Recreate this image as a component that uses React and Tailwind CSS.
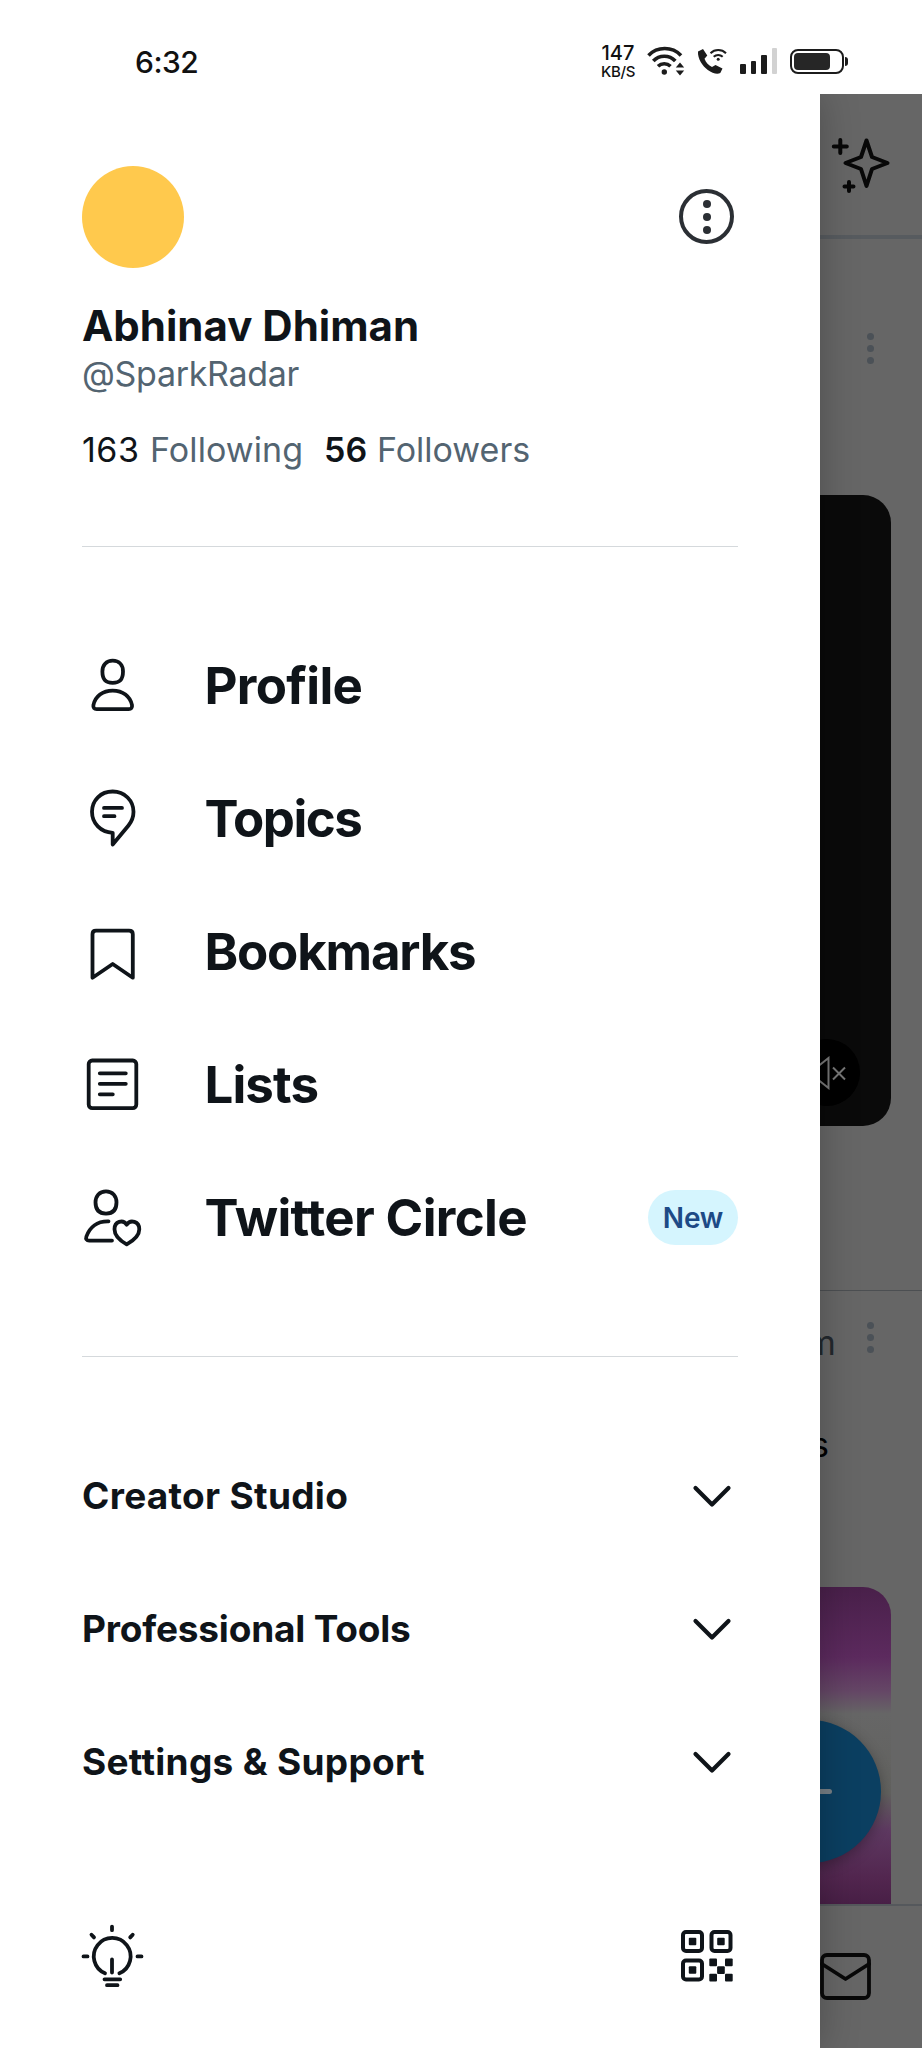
import React from "react";

const stroke = { fill: "none", stroke: "currentColor", strokeWidth: 3.8, strokeLinecap: "round", strokeLinejoin: "round" };

const ProfileIcon = () => (
  <svg className="w-[60px] h-[60px]" viewBox="0 0 60 60" {...stroke}>
    <path d="M30.700 4.700c6.500 0 10.300 4.500 10.300 10.800 0 7.500-2.800 11.300-10.300 11.300s-10.300-3.800-10.300-11.300C20.400 9.200 24.200 4.700 30.700 4.700z" />
    <path d="M30.700 34.700c10 0 17.500 5.500 19.300 14.500.4 2.400-.9 4-3.300 4h-32c-2.400 0-3.700-1.600-3.300-4C13.200 40.200 20.700 34.700 30.700 34.700z" />
  </svg>
);

const TopicsIcon = () => (
  <svg className="w-[60px] h-[60px]" viewBox="0 0 60 60" {...stroke}>
    <path d="M30.700 2.500c12 0 20.800 9.300 20.800 20.300 0 5.500-1.600 9.500-5 13.700L30.700 55.500V43.800C18.700 43.300 10 34.300 10 22.800S18.700 2.500 30.700 2.500z" />
    <path d="M22 18.900h18M22 27.200h10.500" />
  </svg>
);

const BookmarkIcon = () => (
  <svg className="w-[60px] h-[60px]" viewBox="0 0 60 60" {...stroke}>
    <path d="M14 8.700h33c2.200 0 3.800 1.300 3.800 3.500v43.500L30.700 42 10.500 55.700V12.200c0-2.200 1.300-3.500 3.500-3.500z" />
  </svg>
);

const ListsIcon = () => (
  <svg className="w-[60px] h-[60px]" viewBox="0 0 60 60" {...stroke}>
    <rect x="6.700" y="5.500" width="47.600" height="47.600" rx="3.500" />
    <path d="M17.800 18.300h26M17.800 28.800h26M17.800 39.300h13" />
  </svg>
);

const CircleIcon = () => (
  <svg className="w-[60px] h-[60px]" viewBox="0 0 60 60" {...stroke}>
    <path d="M24 3.300c6.500 0 10.500 4.700 10.500 11 0 7.400-2.900 11.300-10.500 11.300s-10.500-3.900-10.500-11.300C13.500 8 17.500 3.300 24 3.300z" />
    <path d="M26.500 33.300C15 33 7.500 39.500 4.400 48.500c-.9 2.500.3 4.100 2.800 4.100H30" />
    <path d="M44.700 36.700c3.800-5.700 12.600-3.300 12.600 4.500 0 6.300-4.800 10.800-12.600 15.100-7.800-4.300-12.200-8.800-12.200-15.100 0-7.800 8.400-10.200 12.200-4.500z" />
  </svg>
);

const ChevronDown = () => (
  <svg className="w-[40px] h-[24px]" viewBox="0 0 40 24" {...stroke} strokeWidth="4.200">
    <path d="M3.500 4L20 20.500 36.500 4" />
  </svg>
);

const BulbIcon = () => (
  <svg className="-ml-[2px] mt-[1px] w-[64px] h-[64px]" viewBox="0 0 64 64" {...stroke}>
    <path d="M25 49.300a18.400 18.400 0 1 1 14.400 0" />
    <path d="M32 35.500v13M24.500 55.300h15.700M27 61.200h10.500M32 2.600v3.600M11.500 10.700l2.500 2.700M52.700 10.700l-2.500 2.700M3.500 32.400h4M57.500 32.400h4" />
  </svg>
);

const QrIcon = () => (
  <svg className="w-[52px] h-[52px]" viewBox="0 0 52 52">
    <g fill="none" stroke="currentColor" strokeWidth="4">
      <rect x="2" y="2" width="19" height="19" rx="3" />
      <rect x="30.500" y="2" width="19" height="19" rx="3" />
      <rect x="2" y="30.500" width="19" height="19" rx="3" />
    </g>
    <g fill="currentColor">
      <rect x="7.800" y="7.800" width="7.500" height="7.500" rx="1" />
      <rect x="36.200" y="7.800" width="7.500" height="7.500" rx="1" />
      <rect x="7.800" y="36.200" width="7.500" height="7.500" rx="1" />
      <rect x="28.300" y="28.500" width="7.700" height="7.700" rx="1" />
      <rect x="44" y="28.500" width="7.700" height="7.700" rx="1" />
      <rect x="36.100" y="36.200" width="7.700" height="7.700" rx="1" />
      <rect x="28.300" y="43.800" width="7.700" height="7.700" rx="1" />
      <rect x="44" y="43.800" width="7.700" height="7.700" rx="1" />
    </g>
  </svg>
);

const Dots = () => (
  <div className="flex flex-col gap-[5px]">
    <div className="w-[7px] h-[7px] rounded-full bg-[#4b5157]" />
    <div className="w-[7px] h-[7px] rounded-full bg-[#4b5157]" />
    <div className="w-[7px] h-[7px] rounded-full bg-[#4b5157]" />
  </div>
);

const StatusBar = () => (
  <header className="h-[94px] flex items-start bg-white text-[#111]">
    <span className="ml-[135px] mt-[44px] w-[465px] text-[30px] leading-[36px] font-medium tracking-[-0.500px] whitespace-nowrap">6:32</span>
    <div className="mt-[44px] w-[36px] text-center font-medium whitespace-nowrap">
      <div className="text-[20px] leading-[19px]">147</div>
      <div className="text-[15px] leading-[17px] -mx-2 tracking-[-0.300px]">KB/S</div>
    </div>
    <svg className="ml-[11px] mt-[46px] w-[38px] h-[30px]" viewBox="0 0 38 30" fill="none" stroke="#1c1c1c" strokeWidth="3.600">
      <path d="M1.500 9.500a22.500 22.500 0 0 1 32.500 0M6.300 15a15 15 0 0 1 22 0M11 20.300a9 9 0 0 1 12.500 0" />
      <circle cx="17.300" cy="26" r="2.700" fill="#1c1c1c" stroke="none" />
      <path d="M28.800 21.500l4.200-5 4.200 5zM28.800 24.500l4.200 5 4.200-5z" fill="#1c1c1c" stroke="none" />
    </svg>
    <svg className="ml-[12px] mt-[47px] w-[30px] h-[28px]" viewBox="0 0 30 28">
      <path d="M1 4.500L6 2l4.300 6.500-2.800 3.300c1.500 4 4 6.500 7.500 8.200l3.500-2 7 3.500-2.200 4.600c-3 1.700-8 .3-12.500-3.100C5.500 19 .5 11.500 1 4.500z" fill="#1c1c1c" />
      <path d="M13.500 6.200a11 11 0 0 1 15.500 0M16.700 9.800a6.500 6.500 0 0 1 9 0" fill="none" stroke="#1c1c1c" strokeWidth="2" />
      <circle cx="21.200" cy="12.300" r="1.500" fill="#1c1c1c" />
    </svg>
    <div className="ml-[13px] mt-[48px] h-[26px] flex items-end gap-[5px]">
      <div className="w-[5.500px] h-[10px] rounded-[1px] bg-[#1c1c1c]" />
      <div className="w-[5.500px] h-[13px] rounded-[1px] bg-[#1c1c1c]" />
      <div className="w-[5.500px] h-[19px] rounded-[1px] bg-[#1c1c1c]" />
      <div className="w-[5.500px] h-[26px] rounded-[1px] bg-[#d2d2d2]" />
    </div>
    <div className="ml-[13px] mt-[49px] w-[54px] h-[25px] rounded-[8px] border-2 border-[#1c1c1c] p-[2px]">
      <div className="w-[36px] h-[17px] rounded-[4px] bg-[#262626]" />
    </div>
    <div className="ml-[1px] mt-[57px] w-[2.500px] h-[9px] rounded-r bg-[#1c1c1c]" />
  </header>
);

const menu = [
  { label: "Profile", icon: ProfileIcon, style: "tracking-[-0.7px]" },
  { label: "Topics", icon: TopicsIcon, style: "tracking-[-1.5px]" },
  { label: "Bookmarks", icon: BookmarkIcon, style: "tracking-[-1.2px]" },
  { label: "Lists", icon: ListsIcon, style: "tracking-[-0.9px]" },
  { label: "Twitter Circle", icon: CircleIcon, style: "tracking-[-0.65px]", isNew: true },
];

const sections = [
  { label: "Creator Studio", style: "tracking-[0.3px]" },
  { label: "Professional Tools", style: "tracking-[-0.2px]" },
  { label: "Settings & Support", style: "tracking-[0.3px]" },
];

const Drawer = () => (
  <aside className="relative z-10 w-[820px] shrink-0 bg-white px-[82px] flex flex-col shadow-[0_0_36px_rgba(0,0,0,0.25)] text-[#0f1419]">
    <div className="mt-[72px] flex items-start justify-between">
      <div className="w-[102px] h-[102px] rounded-full bg-[#ffc94d]" />
      <div className="mr-[4px] mt-[23px] w-[55px] h-[55px] rounded-full border-[4px] border-[#2b2f34] flex flex-col items-center justify-center gap-[5px]">
        <div className="w-[8px] h-[8px] rounded-full bg-[#2b2f34]" />
        <div className="w-[8px] h-[8px] rounded-full bg-[#2b2f34]" />
        <div className="w-[8px] h-[8px] rounded-full bg-[#2b2f34]" />
      </div>
    </div>
    <h1 className="mt-[33px] h-[50px] text-[42px] leading-[50px] font-bold whitespace-nowrap">Abhinav Dhiman</h1>
    <p className="h-[46px] text-[34px] leading-[46px] tracking-[-0.3px] text-[#536471] whitespace-nowrap">@SparkRadar</p>
    <div className="mt-[30px] h-[46px] flex text-[34px] leading-[46px] text-[#536471] whitespace-nowrap">
      <span className="w-[68px] text-[#0f1419] tracking-[0.5px]">163</span>
      <span className="w-[174px] tracking-[0.1px]">Following</span>
      <span className="w-[53px] text-[#0f1419] font-semibold">56</span>
      <span>Followers</span>
    </div>
    <hr className="mt-[73px] border-0 h-px bg-[#d5d9dc]" />
    <nav className="mt-[72px]">
      {menu.map((item) => (
        <div key={item.label} className="h-[133px] flex items-center">
          <item.icon />
          <span className={`ml-[62.5px] text-[51px] leading-[60px] font-bold whitespace-nowrap ${item.style}`}>{item.label}</span>
          {item.isNew && (
            <span className="ml-auto w-[90px] h-[55px] rounded-full bg-[#d5f5fe] text-[#1d4a86] text-[28px] leading-[56px] font-semibold tracking-[-0.2px] text-center">New</span>
          )}
        </div>
      ))}
    </nav>
    <hr className="mt-[72px] border-0 h-px bg-[#d5d9dc]" />
    <div className="mt-[72px]">
      {sections.map((item) => (
        <div key={item.label} className="h-[133px] pr-[6px] flex items-center justify-between">
          <span className={`text-[37px] leading-[46px] font-bold whitespace-nowrap ${item.style}`}>{item.label}</span>
          <ChevronDown />
        </div>
      ))}
    </div>
    <div className="mt-[95px] flex justify-between pr-[5px]">
      <BulbIcon />
      <div className="mt-[7px]"><QrIcon /></div>
    </div>
  </aside>
);

// Timeline behind the drawer, already dimmed by the scrim
const Feed = () => (
  <main className="w-[102px] shrink-0 bg-[#666] text-black flex flex-col overflow-hidden">
    <div className="h-[145px] shrink-0 border-b-4 border-[#575b5f]">
      <svg className="ml-[11px] mt-[39px] w-[60px] h-[60px]" viewBox="0 0 60 60" {...stroke} stroke="#080808">
        <path d="M35.500 7.500l5.500 16.500 15.500 6-15.500 6-5.500 17-5.500-17-15.500-6 15.500-6z" strokeWidth="4" />
        <path d="M9.300 7v13M2.800 13.500h13M18 49v9M13.500 53.500h9" strokeWidth="4" />
      </svg>
    </div>
    <div className="mt-[94px] ml-[47px]"><Dots /></div>
    <div className="mt-[131px] w-[71px] h-[631px] shrink-0 rounded-tr-[28px] rounded-br-[28px] bg-[#0a0a0a] flex flex-col justify-end overflow-hidden">
      <div className="mb-[20px] -ml-[27px] w-[67px] h-[67px] rounded-full bg-black flex items-center">
        <svg className="ml-[14px] w-[40px] h-[34px] shrink-0" viewBox="0 0 40 34" fill="none" stroke="#777" strokeWidth="2">
          <path d="M2 12h7L21.500 2v30L9 22H2zM26 11.500l12 12M38 11.500l-12 12" />
        </svg>
      </div>
    </div>
    <div className="mt-[164px] h-px shrink-0 bg-[#4c4f52]" />
    <div className="flex h-[64px] shrink-0 mt-[31px]">
      <span className="-ml-[14px] mt-[-4px] w-[61px] text-[34px] leading-[50px] text-[#23282d]">m</span>
      <Dots />
    </div>
    <div className="-ml-[9px] mt-[34px] h-[50px] text-[34px] leading-[50px]">s</div>
    <div className="mt-[117px] w-[71px] h-[317px] shrink-0 rounded-tr-[28px] overflow-hidden bg-[linear-gradient(180deg,#49204a_0%,#5c2a5e_22%,#654766_33%,#666_40%,#62625f_65%,#5d3860_77%,#52264f_92%,#481f46_100%)]">
      <div className="-ml-[82px] mt-[133px] w-[143px] h-[143px] rounded-full bg-[#0b3f61] flex items-center justify-end shadow-[0_4px_14px_rgba(0,0,0,0.3)]">
        <div className="mr-[49px] w-[45px] h-[5px] rounded-full bg-[#777f85]" />
      </div>
    </div>
    <div className="h-[2px] shrink-0 bg-[#55585c]" />
    <svg className="mt-[46px] w-[52px] h-[50px] shrink-0" viewBox="0 0 52 50" {...stroke} stroke="#080808">
      <rect x="2" y="3" width="47" height="43" rx="5" />
      <path d="M2 12l23.500 15L49 12" />
    </svg>
  </main>
);

const App = () => {
  return (
    <div className="w-[922px] h-[2048px] overflow-hidden bg-white flex flex-col font-['Inter','Liberation_Sans',sans-serif]">
      <StatusBar />
      <div className="flex flex-1 min-h-0 overflow-hidden">
        <Drawer />
        <Feed />
      </div>
    </div>
  );
};

export default App;
